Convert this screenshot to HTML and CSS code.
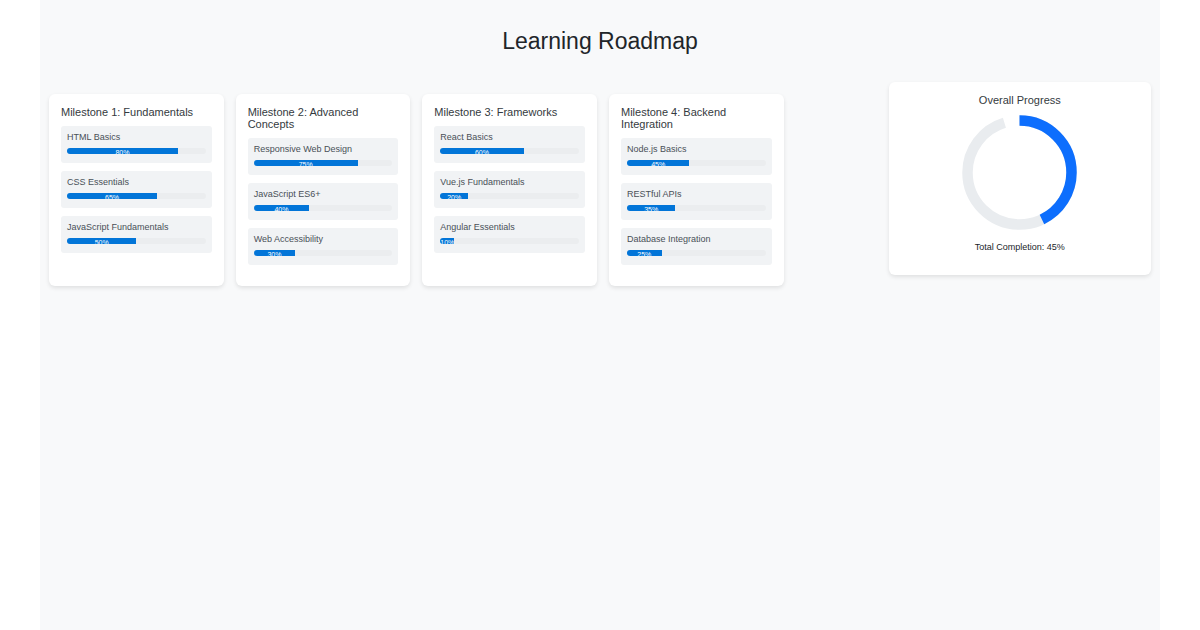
FILE: index.html
```
<!DOCTYPE html>
<html lang="en">

<head>
    <meta charset="UTF-8">
    <meta name="viewport" content="width=device-width, initial-scale=1">
    <title>Learning Roadmap</title>
    <link rel="stylesheet" href="styles.css">
</head>

<body>
    <div class="page">
        <header>
            <h1>Learning Roadmap</h1>
        </header>
        <main class="layout">
            <div class="milestones">
                <section class="card">
                    <h2>Milestone 1: Fundamentals</h2>
                    <div class="module">
                        <h3 id="html">HTML Basics</h3>
                        <div class="progress" role="progressbar" aria-labelledby="html" aria-valuenow="80"><div class="bar" style="width: 80%">80%</div></div>
                    </div>
                    <div class="module">
                        <h3 id="css">CSS Essentials</h3>
                        <div class="progress" role="progressbar" aria-labelledby="css" aria-valuenow="65"><div class="bar" style="width: 65%">65%</div></div>
                    </div>
                    <div class="module">
                        <h3 id="js">JavaScript Fundamentals</h3>
                        <div class="progress" role="progressbar" aria-labelledby="js" aria-valuenow="50"><div class="bar" style="width: 50%">50%</div></div>
                    </div>
                </section>
                <section class="card">
                    <h2>Milestone 2: Advanced Concepts</h2>
                    <div class="module">
                        <h3 id="responsive">Responsive Web Design</h3>
                        <div class="progress" role="progressbar" aria-labelledby="responsive" aria-valuenow="75"><div class="bar" style="width: 75%">75%</div></div>
                    </div>
                    <div class="module">
                        <h3 id="es6">JavaScript ES6+</h3>
                        <div class="progress" role="progressbar" aria-labelledby="es6" aria-valuenow="40"><div class="bar" style="width: 40%">40%</div></div>
                    </div>
                    <div class="module">
                        <h3 id="a11y">Web Accessibility</h3>
                        <div class="progress" role="progressbar" aria-labelledby="a11y" aria-valuenow="30"><div class="bar" style="width: 30%">30%</div></div>
                    </div>
                </section>
                <section class="card">
                    <h2>Milestone 3: Frameworks</h2>
                    <div class="module">
                        <h3 id="react">React Basics</h3>
                        <div class="progress" role="progressbar" aria-labelledby="react" aria-valuenow="60"><div class="bar" style="width: 60%">60%</div></div>
                    </div>
                    <div class="module">
                        <h3 id="vue">Vue.js Fundamentals</h3>
                        <div class="progress" role="progressbar" aria-labelledby="vue" aria-valuenow="20"><div class="bar" style="width: 20%">20%</div></div>
                    </div>
                    <div class="module">
                        <h3 id="angular">Angular Essentials</h3>
                        <div class="progress" role="progressbar" aria-labelledby="angular" aria-valuenow="10"><div class="bar" style="width: 10%">10%</div></div>
                    </div>
                </section>
                <section class="card">
                    <h2>Milestone 4: Backend Integration</h2>
                    <div class="module">
                        <h3 id="node">Node.js Basics</h3>
                        <div class="progress" role="progressbar" aria-labelledby="node" aria-valuenow="45"><div class="bar" style="width: 45%">45%</div></div>
                    </div>
                    <div class="module">
                        <h3 id="rest">RESTful APIs</h3>
                        <div class="progress" role="progressbar" aria-labelledby="rest" aria-valuenow="35"><div class="bar" style="width: 35%">35%</div></div>
                    </div>
                    <div class="module">
                        <h3 id="database">Database Integration</h3>
                        <div class="progress" role="progressbar" aria-labelledby="database" aria-valuenow="25"><div class="bar" style="width: 25%">25%</div></div>
                    </div>
                </section>
            </div>
            <aside class="card overall">
                <h2>Overall Progress</h2>
                <svg class="ring" viewBox="0 0 230 230" fill="none" stroke-width="21" aria-hidden="true">
                    <g transform="rotate(-90 115 115)">
                        <circle class="ring-track" cx="115" cy="115" r="104" pathLength="105" stroke-dasharray="100 105" />
                        <circle class="ring-value" cx="115" cy="115" r="104" pathLength="105" stroke-dasharray="45 105" />
                    </g>
                </svg>
                <p>Total Completion: 45%</p>
            </aside>
        </main>
    </div>
</body>

</html>
```
FILE: styles.css
```
* {
    box-sizing: border-box;
}

body {
    margin: 0;
    padding: 0 40px;
    background-color: white;
    color: #212529;
    font-family: "Liberation Sans", Arial, sans-serif;
}

h1,
h2,
h3,
p {
    margin: 0;
    font-weight: normal;
}

.page {
    min-height: 100vh;
    padding: 27px 9px;
    background-color: #f8f9fa;
}

h1 {
    font-size: 23px;
    line-height: 28px;
    text-align: center;
}

.layout {
    display: grid;
    grid-template-columns: 14fr 5fr;
    column-gap: 105px;
    align-items: start;
    margin-top: 27px;
}

.milestones {
    display: grid;
    grid-template-columns: repeat(4, 1fr);
    gap: 12px;
    margin-top: 12px;
}

.card {
    padding: 12px 12px 21px;
    border-radius: 6px;
    background-color: white;
    box-shadow: 0 2px 4px rgba(0, 0, 0, .1);
}

h2 {
    margin-bottom: 8px;
    color: #343a40;
    font-size: 11px;
    line-height: 12px;
}

.module {
    padding: 6px 6px 9px;
    border-radius: 3px;
    background-color: #f1f3f5;
}

.module + .module {
    margin-top: 8px;
}

h3 {
    margin-bottom: 5px;
    color: #495057;
    font-size: 9px;
    line-height: 11px;
}

.progress {
    height: 6px;
    overflow: hidden;
    border-radius: 3px;
    background-color: #ebedef;
}

.bar {
    background-color: #0275d8;
    color: white;
    font-size: 7px;
    line-height: 10px;
    text-align: center;
}

.overall {
    text-align: center;
}

.ring {
    display: block;
    width: 115px;
    margin: 9px auto 12px;
}

.ring-track {
    stroke: #e9ecef;
}

.ring-value {
    stroke: #0d6efd;
}

.overall p {
    margin-bottom: 1px;
    font-size: 9px;
    line-height: 11px;
}
```
